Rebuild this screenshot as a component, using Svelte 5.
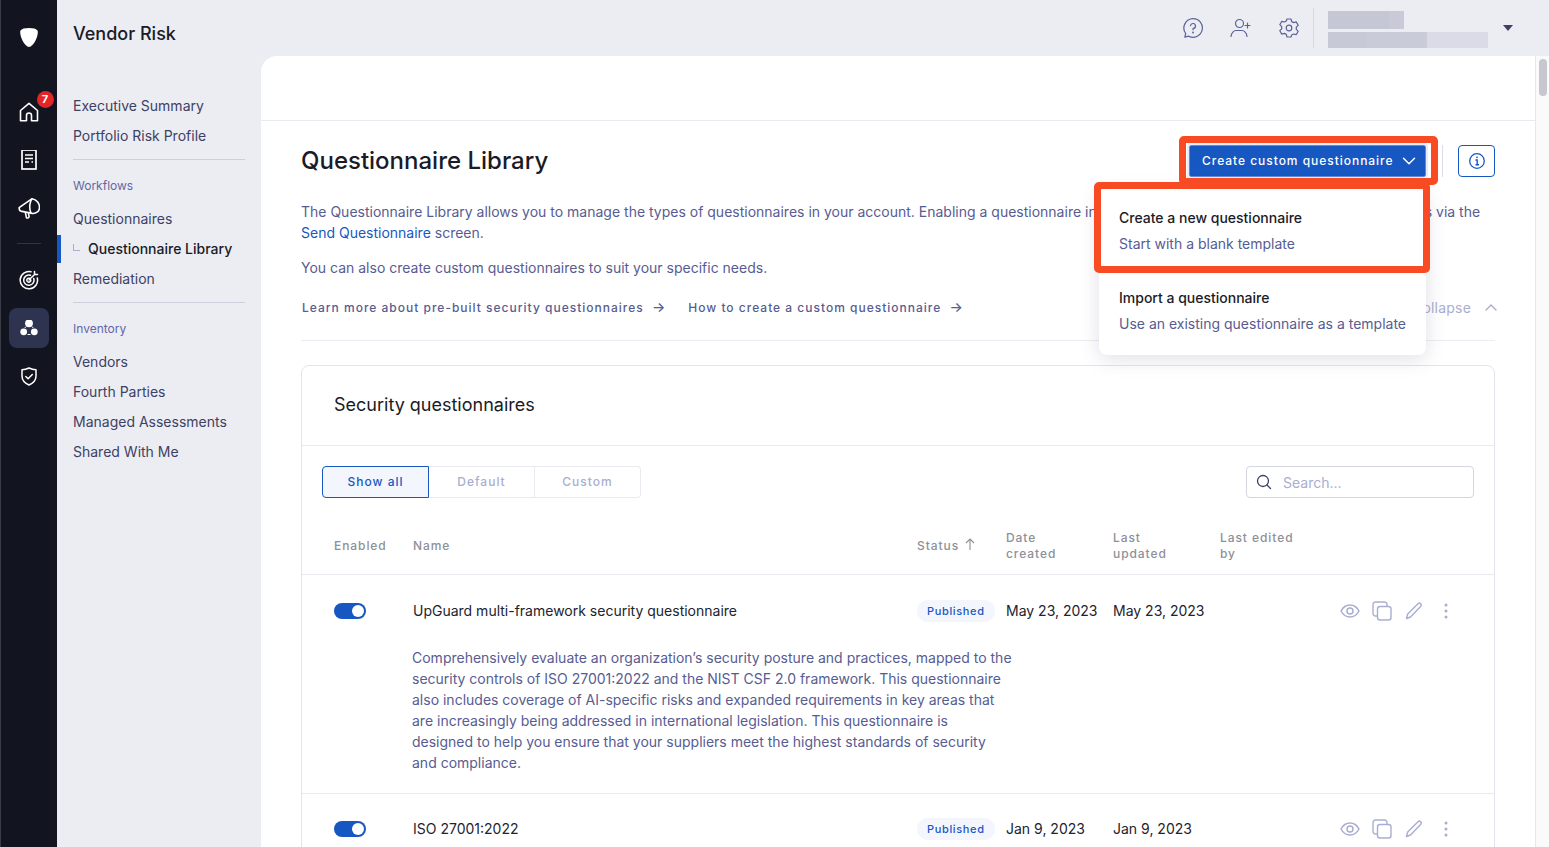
<script>
  const topLinks = ['Executive Summary', 'Portfolio Risk Profile']
  const inventory = ['Vendors', 'Fourth Parties', 'Managed Assessments', 'Shared With Me']
  const tabs = ['Show all', 'Default', 'Custom']

  const rows = [
    {
      name: 'UpGuard multi-framework security questionnaire',
      created: 'May 23, 2023',
      updated: 'May 23, 2023',
      lines: [
        'Comprehensively evaluate an organization’s security posture and practices, mapped to the',
        'security controls of ISO 27001:2022 and the NIST CSF 2.0 framework. This questionnaire',
        'also includes coverage of AI-specific risks and expanded requirements in key areas that',
        'are increasingly being addressed in international legislation. This questionnaire is',
        'designed to help you ensure that your suppliers meet the highest standards of security',
        'and compliance.'
      ]
    },
    { name: 'ISO 27001:2022', created: 'Jan 9, 2023', updated: 'Jan 9, 2023', lines: [] }
  ]
</script>

<div class="app">
  <aside class="rail">
    <svg class="logo" width="20" height="21" viewBox="0 0 20 21"><path d="M10 1c4 0 7.500.8 8.500 2.500.8 1.500 0 6-2 10C14.800 16.800 12 20 10 20s-4.800-3.200-6.500-6.500c-2-4-2.800-8.500-2-10C2.500 1.800 6 1 10 1z" fill="#fff"/></svg>

    <div class="rail-item home">
      <svg width="20" height="20" viewBox="0 0 20 20" fill="none" stroke="#fff" stroke-width="1.600" stroke-linejoin="round"><path d="M1.500 8.500 10 1.300l8.500 7.200V18.700h-6V13.500a2.500 2.500 0 0 0-5 0V18.700h-6z"/></svg>
      <span class="badge">7</span>
    </div>
    <div class="rail-item">
      <svg width="16" height="21" viewBox="0 1 16 21" fill="none" stroke="#fff" stroke-width="1.700"><rect x="1" y="1" width="14" height="19"/><path d="M4 6h8M4 9.500h8M4 13h4M10.500 13H12" stroke-width="1.400"/></svg>
    </div>
    <div class="rail-item">
      <svg width="22" height="22" viewBox="0.5 1 19.500 19.500" fill="none" stroke="#fff" stroke-width="1.400" stroke-linejoin="round"><path d="M1.500 10.500 13 2.500c4 .5 7 4.500 6.500 8.500-.4 2.800-3 5-6.500 4.500L3 13.500c-1-.3-1.500-2-1.500-3z"/><path d="M13 2.500c-2 2-3 8-1 13M7 14.500l1 5c1.500.5 2.500-.500 2.300-1.500l-.6-3"/></svg>
    </div>
    <div class="rail-sep"></div>
    <div class="rail-item">
      <svg width="20" height="20" viewBox="0 0 20 20" fill="none" stroke="#fff" stroke-width="1.500" stroke-linecap="round"><path d="M12 1.700A8.700 8.700 0 1 0 18.300 8"/><path d="M11.500 5.200A5.200 5.200 0 1 0 14.800 8.500"/><path d="M10.500 8.300A2 2 0 1 0 11.800 10M10 10l6-6M15.500 1.500V4.500H18.500"/></svg>
    </div>
    <div class="rail-item active">
      <svg width="18" height="17" viewBox="0 1 18 17" fill="#fff"><circle cx="9" cy="4.300" r="3.900"/><circle cx="3.700" cy="12.800" r="3.400"/><circle cx="14.300" cy="12.800" r="3.400"/><path d="M6 7.500 4.800 9M12 7.500 13.200 9M7.500 15.500h3" stroke="#fff" stroke-width="1" fill="none"/></svg>
    </div>
    <div class="rail-item">
      <svg width="16" height="19" viewBox="0 0 16 19" fill="none" stroke="#fff" stroke-width="1.500" stroke-linecap="round" stroke-linejoin="round"><path d="M8 1c2 1 4.500 1.700 7 1.800V9c0 4-3 7.200-7 9-4-1.800-7-5-7-9V2.800C3.500 2.700 6 2 8 1z"/><path d="m4.800 9.500 2.300 2.300 4.200-4.300"/></svg>
    </div>
  </aside>

  <nav class="side">
    <div class="product">Vendor Risk</div>
    <div class="group first">
      {#each topLinks as link}
        <div class="link">{link}</div>
      {/each}
    </div>
    <hr />
    <div class="group-label">Workflows</div>
    <div class="group">
      <div class="link">Questionnaires</div>
      <div class="link sub">
        <span class="elbow"></span>Questionnaire Library
      </div>
      <div class="link">Remediation</div>
    </div>
    <hr />
    <div class="group-label">Inventory</div>
    <div class="group">
      {#each inventory as link}
        <div class="link">{link}</div>
      {/each}
    </div>
  </nav>

  <div class="right">
    <header class="topbar">
      <svg width="22" height="22" viewBox="0 0 22 22" fill="none" stroke="#5d6296" stroke-width="1.200" stroke-linecap="round" stroke-linejoin="round"><path d="M11 1.700a9.300 9.300 0 1 1-4.300 17.500l-3.900 1 .9-3.700A9.300 9.300 0 0 1 11 1.700z"/><path d="M8.500 8.600A2.500 2.500 0 1 1 11 11.500v1.200"/><circle cx="11" cy="15.500" r=".4"/></svg>
      <svg width="22" height="20" viewBox="0 0 22 20" fill="none" stroke="#5d6296" stroke-width="1.200" stroke-linecap="round"><circle cx="9.500" cy="5.500" r="4"/><path d="M1 18.500c.3-3.800 3-6 5-6h6c2 0 4.700 2.200 5 6M17.500 5v5M15 7.500h5"/></svg>
      <svg width="22" height="20" viewBox="-1 0 22 20" fill="none" stroke="#5d6296" stroke-width="1.200" stroke-linejoin="round"><path d="M8 1h4l.7 2.600 1.900 1 2.600-.7 2 3.400-1.900 1.900v2.200l1.900 1.900-2 3.400-2.600-.7-1.900 1L12 19H8l-.7-2.600-1.900-1-2.600.7-2-3.400 1.900-1.900V8.600L.8 6.700l2-3.400 2.600.7 1.900-1z"/><circle cx="10" cy="10" r="2.800"/></svg>
      <div class="vsep"></div>
      <div class="account">
        <div class="blur-a"><span></span></div>
        <div class="blur-b"><span></span><span></span></div>
      </div>
      <span class="caret"></span>
    </header>

    <main class="panel">
      <div class="panel-top"></div>
      <div class="content">
        <div class="title-row">
          <h1>Questionnaire Library</h1>
          <button class="primary">
            Create custom questionnaire
            <svg width="14" height="8" viewBox="0 0 14 8" fill="none" stroke="#fff" stroke-width="1.500" stroke-linecap="round" stroke-linejoin="round"><path d="m1.500 1.200 5.500 5.500 5.500-5.500"/></svg>
          </button>
          <div class="title-sep"></div>
          <button class="info" aria-label="Info">
            <svg width="18" height="18" viewBox="0 0 18 18" fill="none" stroke="#1757c2" stroke-width="1.300"><circle cx="9" cy="9" r="7.300"/><path d="M7.500 8H9.200V12.500M7.500 12.800H11" stroke-width="1.400"/><circle cx="9" cy="5.300" r=".9" fill="#1757c2" stroke="none"/></svg>
          </button>
        </div>

        <p class="desc">The Questionnaire Library allows you to manage the types of questionnaires in your account. Enabling a questionnaire in this list will make it available to send to all vendors via the <a href="/send">Send Questionnaire</a> screen.</p>
        <p class="desc second">You can also create custom questionnaires to suit your specific needs.</p>

        <div class="learn">
          <span>Learn more about pre-built security questionnaires <i>→</i></span>
          <span>How to create a custom questionnaire <i>→</i></span>
          <span class="collapse">Collapse
            <svg width="12" height="7" viewBox="0 0 12 7" fill="none" stroke="#a9aed0" stroke-width="1.400" stroke-linecap="round"><path d="m1 6 5-5 5 5"/></svg>
          </span>
        </div>

        <section class="card">
          <h2>Security questionnaires</h2>
          <div class="filters">
            <div class="tabs">
              {#each tabs as tab, i}
                <span class="tab" class:on={i === 0}>{tab}</span>
              {/each}
            </div>
            <div class="search">
              <svg width="16" height="16" viewBox="0 0 16 16" fill="none" stroke="#3d4163" stroke-width="1.300" stroke-linecap="round"><circle cx="7" cy="7" r="5.500"/><path d="m11 11 3.500 3.500"/></svg>
              <span>Search...</span>
            </div>
          </div>

          <div class="thead grid">
            <span>Enabled</span>
            <span>Name</span>
            <span class="status-h">Status
              <svg width="10" height="12" viewBox="0 0 10 12" fill="none" stroke="#8e8f99" stroke-width="1.100"><path d="M5 12V1M1 5l4-4 4 4"/></svg>
            </span>
            <span>Date<br />created</span>
            <span>Last<br />updated</span>
            <span>Last edited<br />by</span>
          </div>

          {#each rows as row}
            <div class="row">
              <div class="grid cells">
                <span class="toggle"></span>
                <span class="cell">{row.name}</span>
                <span><span class="pill">Published</span></span>
                <span class="cell">{row.created}</span>
                <span class="cell">{row.updated}</span>
                <span class="actions">
                  <svg width="20" height="14" viewBox="0 0 20 14" fill="none" stroke="#a9aed0" stroke-width="1.500"><path d="M1 7c2-3.800 5.400-6 9-6s7 2.200 9 6c-2 3.800-5.400 6-9 6s-7-2.200-9-6z"/><circle cx="10" cy="7" r="3"/></svg>
                  <svg width="20" height="20" viewBox="0 0 20 20" fill="none" stroke="#a9aed0" stroke-width="1.400"><rect x="5.500" y="5.500" width="13.500" height="13.500" rx="2.500"/><path d="M5 15H3.500A2.500 2.500 0 0 1 1 12.500V3.500A2.500 2.500 0 0 1 3.500 1h9A2.500 2.500 0 0 1 15 3.500V5"/></svg>
                  <svg width="20" height="18" viewBox="-1 0 20 18" fill="none" stroke="#a9aed0" stroke-width="1.400" stroke-linejoin="round"><path d="M1.500 16.500 2.700 12 13 1.700c.8-.7 1.900-.7 2.600 0 .8.800.8 1.900 0 2.700L5.500 15z"/></svg>
                  <svg width="20" height="16" viewBox="-8 0 20 16" fill="#a9aed0"><circle cx="2" cy="2" r="1.500"/><circle cx="2" cy="8" r="1.500"/><circle cx="2" cy="14" r="1.500"/></svg>
                </span>
              </div>
              {#if row.lines.length}
                <div class="blurb">
                  {#each row.lines as line}
                    <div>{line}</div>
                  {/each}
                </div>
              {/if}
            </div>
          {/each}
        </section>
      </div>

      <div class="menu">
        <div class="menu-item">
          <strong>Create a new questionnaire</strong>
          <span>Start with a blank template</span>
        </div>
        <div class="menu-item">
          <strong>Import a questionnaire</strong>
          <span>Use an existing questionnaire as a template</span>
        </div>
      </div>
      <div class="mark mark-btn"></div>
      <div class="mark mark-menu"></div>
    </main>

    <div class="scroll"><span></span></div>
  </div>
</div>

<style>
  :global(body) {
    margin: 0;
    overflow: hidden;
  }

  .app {
    display: flex;
    height: 847px;
    overflow: hidden;
    background: #ecedf3;
    font-family: Inter, "Liberation Sans", sans-serif;
    font-size: 14px;
    color: #1a1b27;
  }

  .rail {
    width: 57px;
    box-sizing: border-box;
    flex: none;
    display: flex;
    flex-direction: column;
    align-items: center;
    background: #12151f;
    border-left: 1px solid #3a3c46;
    padding-right: 1px;
  }

  .logo {
    margin-top: 27px;
    margin-bottom: 44px;
  }

  .rail-item {
    position: relative;
    width: 40px;
    height: 40px;
    margin-bottom: 8px;
    display: flex;
    align-items: center;
    justify-content: center;
    border-radius: 8px;
  }

  .rail-item.active {
    background: #2e3350;
  }

  .badge {
    position: absolute;
    top: -1px;
    right: -5px;
    width: 17px;
    height: 17px;
    border-radius: 50%;
    background: #e42528;
    color: #fff;
    font-size: 11px;
    font-weight: 700;
    line-height: 17px;
    text-align: center;
  }

  .rail-sep {
    width: 24px;
    height: 1px;
    background: #2e3350;
    margin: 7px 0 16px;
  }

  .side {
    width: 204px;
    flex: none;
    box-sizing: border-box;
    padding: 0 16px;
  }

  .product {
    font-size: 18px;
    font-weight: 500;
    line-height: 24px;
    margin-top: 22px;
    margin-bottom: 45px;
  }

  .link {
    height: 30px;
    line-height: 30px;
    color: #3d4163;
    white-space: nowrap;
  }

  .link.sub {
    position: relative;
    color: #1a1b27;
    font-weight: 500;
    margin-left: -16px;
    padding-left: 31px;
  }

  .link.sub::before {
    content: "";
    position: absolute;
    left: 0;
    top: 1px;
    width: 4px;
    height: 28px;
    background: #1757c2;
  }

  .elbow {
    position: absolute;
    left: 16px;
    top: 10px;
    width: 6px;
    height: 6px;
    border-left: 1px solid #a9aed0;
    border-bottom: 1px solid #a9aed0;
  }

  .side hr {
    border: 0;
    border-top: 1px solid #cdcfe0;
    margin: 8px 0 0;
  }

  .group-label {
    font-size: 12px;
    color: #6267a3;
    line-height: 16px;
    margin-top: 18px;
    margin-bottom: 10px;
  }

  .right {
    flex: 1;
    min-width: 0;
    position: relative;
    display: flex;
    flex-direction: column;
  }

  .topbar {
    height: 56px;
    flex: none;
    display: flex;
    align-items: center;
    box-sizing: border-box;
    padding-left: 921px;
    gap: 26px;
  }

  .vsep {
    width: 1px;
    height: 40px;
    background: #d6d7e3;
    margin-left: -13px;
  }

  .account {
    margin-left: -12px;
    width: 160px;
    display: flex;
    flex-direction: column;
    gap: 3px;
    margin-top: 2px;
  }

  .blur-a {
    width: 76px;
    height: 18px;
    background: #c9cad8;
  }

  .blur-a span {
    display: block;
    width: 61px;
    height: 18px;
    background: #c6c7d5;
  }

  .blur-b {
    height: 16px;
    background: #dadbe6;
    display: flex;
  }

  .blur-b span {
    width: 38px;
    background: #c8c9d7;
  }

  .blur-b span:last-child {
    width: 61px;
    background: #c9cbd9;
  }

  .caret {
    width: 0;
    height: 0;
    border-left: 5px solid transparent;
    border-right: 5px solid transparent;
    border-top: 6px solid #3d4163;
    margin-left: -11px;
  }

  .panel {
    position: relative;
    width: 1275px;
    flex: 1;
    min-height: 0;
    box-sizing: border-box;
    background: #fff;
    border-top-left-radius: 16px;
    border-right: 1px solid #e6e7ef;
    overflow: hidden;
  }

  .panel-top {
    height: 64px;
    border-bottom: 1px solid #e9eaf0;
  }

  .content {
    padding: 0 40px;
  }

  .title-row {
    display: flex;
    align-items: center;
    height: 80px;
  }

  h1 {
    font-size: 24px;
    font-weight: 500;
    line-height: 32px;
    margin: 0 auto 0 0;
  }

  .primary {
    width: 237px;
    height: 32px;
    margin-right: 16px;
    box-sizing: border-box;
    display: flex;
    align-items: center;
    justify-content: space-between;
    padding: 0 9px 1px 12px;
    border: 1px solid #5f8ad6;
    border-radius: 2px;
    background: #1757c2;
    color: #fff;
    font: 500 12px Inter, "Liberation Sans", sans-serif;
    letter-spacing: 0.97px;
    outline: 2px solid #e8ecf6;
  }

  .title-sep {
    width: 1px;
    height: 32px;
    background: #dcdde8;
    margin-right: 15px;
  }

  .info {
    width: 37px;
    height: 32px;
    padding: 0;
    display: flex;
    align-items: center;
    justify-content: center;
    background: #fff;
    border: 1px solid #1757c2;
    border-radius: 4px;
  }

  .desc {
    margin: 0;
    color: #575c92;
    line-height: 21px;
  }

  .desc a {
    color: #1757c2;
    text-decoration: none;
  }

  .second {
    margin-top: 14px;
  }

  .learn {
    display: flex;
    align-items: center;
    gap: 22px;
    margin-top: 20px;
    padding-left: 1px;
    padding-bottom: 23px;
    border-bottom: 1px solid #ecedf3;
    color: #575c92;
    font-size: 12px;
    font-weight: 500;
    letter-spacing: 1px;
    line-height: 18px;
  }

  .learn i {
    font-style: normal;
    font-size: 14px;
    margin-left: 4px;
  }

  .collapse {
    margin-left: auto;
    margin-right: -2px;
    color: #a9aed0;
    font-size: 14px;
    font-weight: 400;
    letter-spacing: 0.2px;
    display: flex;
    align-items: center;
    gap: 14px;
  }

  .card {
    margin-top: 24px;
    border: 1px solid #e3e4ec;
    border-radius: 8px 8px 0 0;
  }

  h2 {
    margin: 0;
    height: 80px;
    box-sizing: border-box;
    padding: 0 32px;
    font-size: 18px;
    font-weight: 400;
    line-height: 78px;
    border-bottom: 1px solid #e9eaf0;
  }

  .filters {
    display: flex;
    justify-content: space-between;
    padding: 20px 20px 0;
  }

  .tabs {
    display: flex;
    height: 32px;
  }

  .tab {
    width: 106px;
    box-sizing: border-box;
    text-align: center;
    line-height: 30px;
    border: 1px solid #e9eaf0;
    border-left: 0;
    color: #a9aed0;
    font-size: 12px;
    font-weight: 500;
    letter-spacing: 1px;
  }

  .tab:last-child {
    border-radius: 0 4px 4px 0;
  }

  .tab.on {
    width: 107px;
    border: 1px solid #1757c2;
    border-radius: 4px 0 0 4px;
    background: #f3f6fc;
    color: #1757c2;
  }

  .search {
    width: 228px;
    height: 32px;
    box-sizing: border-box;
    display: flex;
    align-items: center;
    gap: 11px;
    padding-left: 9px;
    border: 1px solid #d3d5e3;
    border-radius: 4px;
    color: #a9aed0;
  }

  .grid {
    display: grid;
    grid-template-columns: 79px 504px 89px 107px 107px 1fr;
    padding-left: 32px;
  }

  .thead {
    align-items: center;
    margin-top: 20px;
    height: 56px;
    box-sizing: border-box;
    color: #8e8f99;
    font-size: 12px;
    font-weight: 500;
    letter-spacing: 0.93px;
    line-height: 16px;
  }

  .status-h {
    display: flex;
    align-items: center;
    gap: 6px;
  }

  .status-h svg {
    margin-top: -4px;
  }

  .row {
    border-top: 1px solid #e9eaf0;
    padding: 20px 0;
  }

  .row:last-child {
    padding-top: 19px;
  }

  .cells {
    align-items: center;
    height: 32px;
    color: #22232e;
  }

  .cell {
    padding-bottom: 2px;
  }

  .toggle {
    position: relative;
    display: block;
    width: 32px;
    height: 16px;
    border-radius: 8px;
    background: #1757c2;
  }

  .toggle::after {
    content: "";
    position: absolute;
    right: 2px;
    top: 2px;
    width: 12px;
    height: 12px;
    border-radius: 50%;
    background: #fff;
  }

  .pill {
    display: inline-block;
    height: 22px;
    padding: 0 10px;
    border-radius: 11px;
    background: #f3f6fc;
    color: #1757c2;
    font-size: 11px;
    font-weight: 500;
    letter-spacing: 0.65px;
    line-height: 22px;
  }

  .actions {
    display: flex;
    align-items: center;
    padding-left: 120px;
    gap: 12px;
  }

  .blurb {
    margin: 20px 0 0 110px;
    color: #575c92;
    line-height: 21px;
    white-space: nowrap;
  }

  .menu {
    position: absolute;
    left: 838px;
    top: 133px;
    width: 327px;
    box-sizing: border-box;
    padding: 7px 0 0;
    background: #fff;
    border-radius: 8px;
    box-shadow: 0 4px 20px rgba(60, 65, 110, 0.16);
  }

  .menu-item {
    display: flex;
    flex-direction: column;
    gap: 7px;
    padding: 12px 20px 0;
    height: 80px;
    box-sizing: border-box;
    line-height: 19px;
  }

  .menu-item:last-child {
    height: 79px;
  }

  .menu-item strong {
    font-weight: 500;
  }

  .menu-item span {
    color: #575c92;
  }

  .mark {
    position: absolute;
    box-sizing: border-box;
    border: 7px solid #f84b24;
    border-radius: 5px;
  }

  .mark-btn {
    left: 918px;
    top: 80px;
    width: 259px;
    height: 49px;
  }

  .mark-menu {
    left: 833px;
    top: 126px;
    width: 336px;
    height: 91px;
  }

  .scroll {
    position: absolute;
    top: 56px;
    right: 0;
    bottom: 0;
    width: 13px;
    background: #fafafb;
  }

  .scroll span {
    position: absolute;
    left: 3px;
    top: 3px;
    width: 8px;
    height: 37px;
    border-radius: 4px;
    background: #c6c7cf;
  }
</style>
